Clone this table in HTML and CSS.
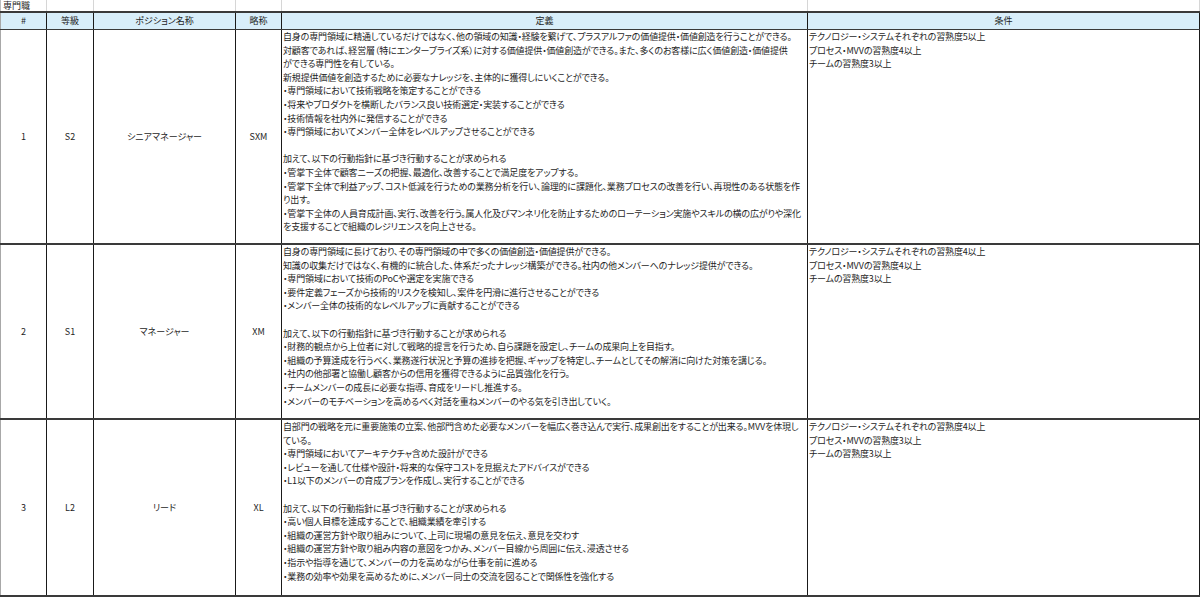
FILE: index.html
```html
<!DOCTYPE html>
<html lang="ja">
<head>
<meta charset="utf-8">
<title>専門職</title>
<link rel="stylesheet" href="styles.css">
</head>
<body>
<table class="sheet">
  <colgroup>
    <col class="c-no">
    <col class="c-grade">
    <col class="c-name">
    <col class="c-abbr">
    <col class="c-def">
    <col class="c-cond">
  </colgroup>
  <tr class="title-row">
    <td class="title">専門職</td><td></td><td></td><td></td><td></td><td></td>
  </tr>
  <tr class="head-row">
    <th>#</th><th>等級</th><th>ポジション名称</th><th>略称</th><th>定義</th><th>条件</th>
  </tr>
  <tr class="row r1">
    <td class="mid">1</td>
    <td class="mid">S2</td>
    <td class="mid">シニアマネージャー</td>
    <td class="mid">SXM</td>
    <td class="txt">自身の専門領域に精通しているだけではなく、他の領域の知識・経験を繋げて、プラスアルファの価値提供・価値創造を行うことができる。<br>対顧客であれば、経営層（特にエンタープライズ系）に対する価値提供・価値創造ができる。また、多くのお客様に広く価値創造・価値提供<br>ができる専門性を有している。<br>新規提供価値を創造するために必要なナレッジを、主体的に獲得しにいくことができる。<br>・専門領域において技術戦略を策定することができる<br>・将来やプロダクトを横断したバランス良い技術選定・実装することができる<br>・技術情報を社内外に発信することができる<br>・専門領域においてメンバー全体をレベルアップさせることができる<br><br>加えて、以下の行動指針に基づき行動することが求められる<br>・管掌下全体で顧客ニーズの把握、最適化、改善することで満足度をアップする。<br>・管掌下全体で利益アップ、コスト低減を行うための業務分析を行い、論理的に課題化、業務プロセスの改善を行い、再現性のある状態を作<br>り出す。<br>・管掌下全体の人員育成計画、実行、改善を行う。属人化及びマンネリ化を防止するためのローテーション実施やスキルの横の広がりや深化<br>を支援することで組織のレジリエンスを向上させる。</td>
    <td class="txt">テクノロジー・システムそれぞれの習熟度5以上<br>プロセス・MVVの習熟度4以上<br>チームの習熟度3以上</td>
  </tr>
  <tr class="row r2">
    <td class="mid">2</td>
    <td class="mid">S1</td>
    <td class="mid">マネージャー</td>
    <td class="mid">XM</td>
    <td class="txt">自身の専門領域に長けており、その専門領域の中で多くの価値創造・価値提供ができる。<br>知識の収集だけではなく、有機的に統合した、体系だったナレッジ構築ができる。社内の他メンバーへのナレッジ提供ができる。<br>・専門領域において技術のPoCや選定を実施できる<br>・要件定義フェーズから技術的リスクを検知し、案件を円滑に進行させることができる<br>・メンバー全体の技術的なレベルアップに貢献することができる<br><br>加えて、以下の行動指針に基づき行動することが求められる<br>・財務的観点から上位者に対して戦略的提言を行うため、自ら課題を設定し、チームの成果向上を目指す。<br>・組織の予算達成を行うべく、業務遂行状況と予算の進捗を把握、ギャップを特定し、チームとしてその解消に向けた対策を講じる。<br>・社内の他部署と協働し顧客からの信用を獲得できるように品質強化を行う。<br>・チームメンバーの成長に必要な指導、育成をリードし推進する。<br>・メンバーのモチベーションを高めるべく対話を重ねメンバーのやる気を引き出していく。</td>
    <td class="txt">テクノロジー・システムそれぞれの習熟度4以上<br>プロセス・MVVの習熟度4以上<br>チームの習熟度3以上</td>
  </tr>
  <tr class="row r3">
    <td class="mid">3</td>
    <td class="mid">L2</td>
    <td class="mid">リード</td>
    <td class="mid">XL</td>
    <td class="txt">自部門の戦略を元に重要施策の立案、他部門含めた必要なメンバーを幅広く巻き込んで実行、成果創出をすることが出来る。MVVを体現し<br>ている。<br>・専門領域においてアーキテクチャ含めた設計ができる<br>・レビューを通して仕様や設計・将来的な保守コストを見据えたアドバイスができる<br>・L1以下のメンバーの育成プランを作成し、実行することができる<br><br>加えて、以下の行動指針に基づき行動することが求められる<br>・高い個人目標を達成することで、組織業績を牽引する<br>・組織の運営方針や取り組みについて、上司に現場の意見を伝え、意見を交わす<br>・組織の運営方針や取り組み内容の意図をつかみ、メンバー目線から周囲に伝え、浸透させる<br>・指示や指導を通じて、メンバーの力を高めながら仕事を前に進める<br>・業務の効率や効果を高めるために、メンバー同士の交流を図ることで関係性を強化する</td>
    <td class="txt">テクノロジー・システムそれぞれの習熟度4以上<br>プロセス・MVVの習熟度3以上<br>チームの習熟度3以上</td>
  </tr>
</table>
</body>
</html>
```

FILE: styles.css
```css
html, body {
  margin: 0;
  padding: 0;
  background: #ffffff;
}

body {
  font-family: "Noto Sans CJK JP", "Liberation Sans", sans-serif;
  font-size: 9px;
  color: #1e1e1e;
  font-feature-settings: "palt";
}

.sheet {
  border-collapse: collapse;
  table-layout: fixed;
  width: 1199px;
}

.c-no { width: 46px; }
.c-grade { width: 47px; }
.c-name { width: 142px; }
.c-abbr { width: 46px; }
.c-def { width: 526px; }
.c-cond { width: 392px; }

.title-row td {
  height: 11px;
  padding: 0 2px;
  line-height: 11px;
  border-left: 1px solid #d6d6d6;
  border-right: 1px solid #d6d6d6;
  white-space: nowrap;
  vertical-align: top;
}

.title-row td.title {
  border-left: 1px solid #bdbdbd;
}

.head-row th {
  height: 16px;
  padding: 0;
  font-weight: normal;
  line-height: 16px;
  text-align: center;
  background-color: #d9f0fb;
  background-image: repeating-conic-gradient(#cde8f6 0 25%, #e2f4fd 0 50%);
  background-size: 2px 2px;
  border-top: 2px solid #3a3a3a;
  border-bottom: 1px solid #3a3a3a;
  border-left: 1px solid #1a1a1a;
  border-right: 1px solid #1a1a1a;
}

.head-row th:first-child {
  border-left: 1px solid #a8a8a8;
}

.row td {
  border-left: 1px solid #1a1a1a;
  border-right: 1px solid #1a1a1a;
  border-bottom: 2px solid #3a3a3a;
  padding: 0 1px;
  line-height: 13.6px;
}

.row td:first-child {
  border-left: 1px solid #a8a8a8;
}

.r1 td { height: 213px; }
.r2 td { height: 173px; }
.r3 td { height: 175px; }

.mid {
  text-align: center;
  vertical-align: middle;
}

.txt {
  text-align: left;
  vertical-align: top;
  white-space: nowrap;
  overflow: hidden;
  padding-top: 1px;
  letter-spacing: -0.15px;
}
```
